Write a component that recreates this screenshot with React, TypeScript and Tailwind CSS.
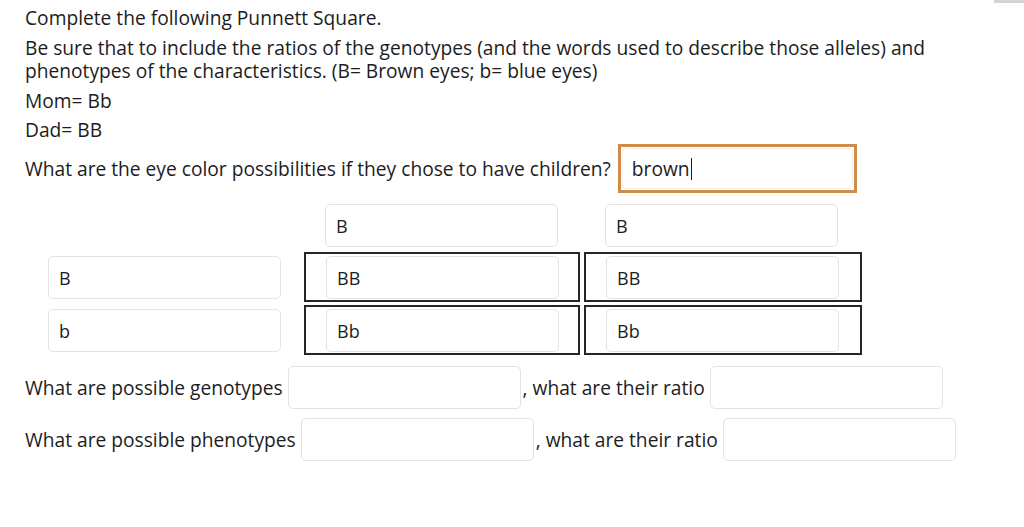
import React from "react";

const font = { fontFamily: '"Open Sans", "Liberation Sans", sans-serif' };

function Box({ value = "", w = "w-[233px]", h = "h-[43px]" }: { value?: string; w?: string; h?: string }) {
  return (
    <input
      readOnly
      value={value}
      className={`${w} ${h} rounded-[5px] border border-[#e3e3e3] bg-white px-[10px] text-[18px] text-[#1c1c1c] outline-none`}
      style={font}
    />
  );
}

function Cell({ value, w }: { value: string; w: string }) {
  return (
    <div className={`${w} h-[50px] border-2 border-[#262626] pl-[20px] pt-[2px]`}>
      <Box value={value} />
    </div>
  );
}

export default function App() {
  return (
    <div className="relative min-h-[527px] bg-white pl-[25px] pt-[6px] text-[19.2px] leading-[23px] text-[#1c1c1c]" style={font}>
      <div className="absolute right-0 top-0 h-[3px] w-[30px] bg-[#d4d4d4]" />

      <p>Complete the following Punnett Square.</p>
      <p className="mt-[7px]">
        Be sure that to include the ratios of the genotypes (and the words used to describe those alleles) and
        <br />
        phenotypes of the characteristics. (B= Brown eyes; b= blue eyes)
      </p>
      <p className="mt-[7px]">Mom= Bb</p>
      <p className="mt-[6px]">Dad= BB</p>

      <div className="mt-[3px] flex items-center">
        <span>What are the eye color possibilities if they chose to have children?</span>
        <div className="ml-[7px] h-[49px] w-[239px] border-[3px] border-[#d08a4a] p-px">
          <div className="flex h-full items-center rounded-[4px] border border-[#ececec] pl-[9px]">
            <span>brown</span>
            <span className="ml-px h-[22px] w-px bg-[#1c1c1c]" />
          </div>
        </div>
      </div>

      {/* punnett square */}
      <div className="ml-[23px] mt-[11px] flex flex-col gap-[3px]">
        <div className="flex h-[45px] gap-[4px]">
          <div className="w-[252px]" />
          <div className="w-[276px] pl-[21px]">
            <Box value="B" />
          </div>
          <div className="w-[278px] pl-[21px]">
            <Box value="B" />
          </div>
        </div>
        <div className="flex gap-[4px]">
          <div className="w-[252px] pt-[4px]">
            <Box value="B" />
          </div>
          <Cell value="BB" w="w-[276px]" />
          <Cell value="BB" w="w-[278px]" />
        </div>
        <div className="flex gap-[4px]">
          <div className="w-[252px] pt-[4px]">
            <Box value="b" />
          </div>
          <Cell value="Bb" w="w-[276px]" />
          <Cell value="Bb" w="w-[278px]" />
        </div>
      </div>

      <div className="mt-[11px] flex items-center">
        <span>What are possible genotypes</span>
        <span className="ml-[5px]"><Box /></span>
        <span className="ml-[2px]">, what are their ratio</span>
        <span className="ml-[5px]"><Box /></span>
      </div>
      <div className="mt-[9px] flex items-center">
        <span>What are possible phenotypes</span>
        <span className="ml-[5px]"><Box /></span>
        <span className="ml-[2px]">, what are their ratio</span>
        <span className="ml-[5px]"><Box /></span>
      </div>
    </div>
  );
}
